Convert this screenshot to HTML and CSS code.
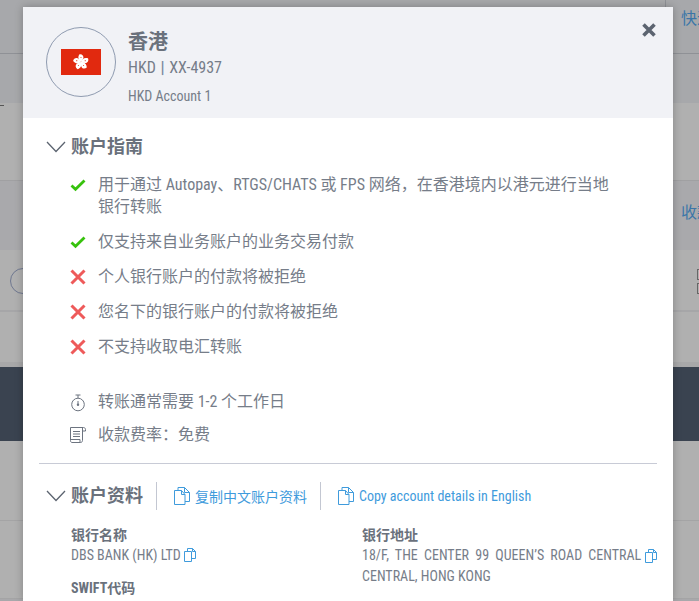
FILE: index.html
```html
<!DOCTYPE html>
<html lang="zh-CN">
<head>
<meta charset="utf-8">
<title>香港</title>
<link rel="stylesheet" href="styles.css">
</head>
<body>
<div class="page">
  <div class="band b1"></div>
  <div class="band b2"></div>
  <div class="band b3"></div>
  <div class="band b4"></div>
  <div class="band b5"></div>
  <div class="band b6"></div>
  <div class="band b7"></div>
  <div class="band b8"></div>
  <div class="band b9"></div>
  <span class="side-link link-a">快速</span>
  <span class="side-link link-b">收款</span>
  <span class="side-radio"></span>
  <span class="side-box box-a"></span>
  <span class="side-box box-b"></span>
  <span class="side-vline"></span>
  <span class="side-dash"></span>
</div>

<div class="modal">
  <header class="head">
    <div class="flag-ring">
      <svg class="flag" viewBox="0 0 40 26" width="40" height="26">
        <rect width="40" height="26" fill="#e1290f"/>
        <g transform="translate(20 13) scale(1.05)">
          <g fill="#fff">
            <path d="M0 0C-2.600-1.600-3.400-4.600-1.400-7.400 1-7.800 2.800-5.800 2.300-3.800 2-2.400 1-1.200 0 0Z"/>
            <path d="M0 0C-2.600-1.600-3.400-4.600-1.400-7.400 1-7.800 2.800-5.800 2.300-3.800 2-2.400 1-1.200 0 0Z" transform="rotate(72)"/>
            <path d="M0 0C-2.600-1.600-3.400-4.600-1.400-7.400 1-7.800 2.800-5.800 2.300-3.800 2-2.400 1-1.200 0 0Z" transform="rotate(144)"/>
            <path d="M0 0C-2.600-1.600-3.400-4.600-1.400-7.400 1-7.800 2.800-5.800 2.300-3.800 2-2.400 1-1.200 0 0Z" transform="rotate(216)"/>
            <path d="M0 0C-2.600-1.600-3.400-4.600-1.400-7.400 1-7.800 2.800-5.800 2.300-3.800 2-2.400 1-1.200 0 0Z" transform="rotate(288)"/>
          </g>
          <g fill="#e1290f">
            <circle cx="0" cy="-4.200" r=".5"/>
            <circle cx="4" cy="-1.300" r=".5"/>
            <circle cx="2.500" cy="3.400" r=".5"/>
            <circle cx="-2.500" cy="3.400" r=".5"/>
            <circle cx="-4" cy="-1.300" r=".5"/>
          </g>
        </g>
      </svg>
    </div>
    <div class="head-text">
      <div class="title">香港</div>
      <div class="acct">HKD <span class="bar">|</span> XX-4937</div>
      <div class="nick">HKD Account 1</div>
    </div>
    <svg class="close" viewBox="0 0 16 16" width="16" height="16"><path d="M2.500 2.500l11 11M13.500 2.500l-11 11" stroke="#5c6470" stroke-width="3.600" fill="none"/></svg>
  </header>

  <section class="guide">
    <h2 class="sec-title">
      <svg class="chev" viewBox="0 0 20 12" width="20" height="12"><path d="M1 1l9 9.500 9-9.500" fill="none" stroke="#5c6470" stroke-width="1.300"/></svg>
      账户指南
    </h2>
    <ul class="rules">
      <li class="rule"><svg class="ico" viewBox="0 0 16 16" width="16" height="16"><path d="M1.500 8.500l4 3.800 9-8.800" fill="none" stroke="#37c20d" stroke-width="2.800"/></svg><span>用于通过 Autopay、RTGS/CHATS 或 FPS 网络，在香港境内以港元进行当地银行转账</span></li>
      <li class="rule"><svg class="ico" viewBox="0 0 16 16" width="16" height="16"><path d="M1.500 8.500l4 3.800 9-8.800" fill="none" stroke="#37c20d" stroke-width="2.800"/></svg><span>仅支持来自业务账户的业务交易付款</span></li>
      <li class="rule"><svg class="ico" viewBox="0 0 16 16" width="16" height="16"><path d="M1.500 1.500l13 13M14.500 1.500l-13 13" fill="none" stroke="#ee5a5a" stroke-width="3"/></svg><span>个人银行账户的付款将被拒绝</span></li>
      <li class="rule"><svg class="ico" viewBox="0 0 16 16" width="16" height="16"><path d="M1.500 1.500l13 13M14.500 1.500l-13 13" fill="none" stroke="#ee5a5a" stroke-width="3"/></svg><span>您名下的银行账户的付款将被拒绝</span></li>
      <li class="rule"><svg class="ico" viewBox="0 0 16 16" width="16" height="16"><path d="M1.500 1.500l13 13M14.500 1.500l-13 13" fill="none" stroke="#ee5a5a" stroke-width="3"/></svg><span>不支持收取电汇转账</span></li>
    </ul>
    <ul class="facts">
      <li class="rule"><svg class="ico" viewBox="0 0 16 18" width="16" height="18"><g fill="none" stroke="#6d7480" stroke-width="1"><circle cx="8" cy="10.500" r="6.300"/><path d="M5.500 1h5M8 1v3M8 7v3"/></g><circle cx="8" cy="10.800" r="1.200" fill="#6d7480"/></svg><span>转账通常需要 1-2 个工作日</span></li>
      <li class="rule"><svg class="ico" viewBox="0 0 16 16" width="16" height="16"><g fill="none" stroke="#6d7480" stroke-width="1"><path d="M.5 .5h13c1 0 2 .8 2 2v1.500h-3M12.500 .5V13.500c0 1-.7 2-2 2H2c-1 0-1.500-.8-1.500-2V.5M.5 12.500h9.500v3"/><path d="M3 4.500h7M3 7h7M3 9.500h7"/></g></svg><span>收款费率：免费</span></li>
    </ul>
  </section>

  <section class="details">
    <div class="det-head">
      <h2 class="sec-title">
        <svg class="chev" viewBox="0 0 20 12" width="20" height="12"><path d="M1 1l9 9.500 9-9.500" fill="none" stroke="#5c6470" stroke-width="1.300"/></svg>
        账户资料
      </h2>
      <a class="copy">
        <svg viewBox="0 0 16 18" width="16" height="18"><g fill="none" stroke="#3f9bdc" stroke-width="1"><path d="M.5 3.500h7l3.500 4v10H.5zM7.500 3.500v4H11"/><path d="M4 3.500V.5h6.500l5 5v9H11M10.500.5v5h5"/></g></svg>
        复制中文账户资料
      </a>
      <a class="copy">
        <svg viewBox="0 0 16 18" width="16" height="18"><g fill="none" stroke="#3f9bdc" stroke-width="1"><path d="M.5 3.500h7l3.500 4v10H.5zM7.500 3.500v4H11"/><path d="M4 3.500V.5h6.500l5 5v9H11M10.500.5v5h5"/></g></svg>
        Copy account details in English
      </a>
    </div>
    <div class="fields">
      <div class="field">
        <div class="label">银行名称</div>
        <div class="value">DBS BANK (HK) LTD <svg class="mini" viewBox="0 0 12 14" width="12" height="14"><g fill="none" stroke="#3f9bdc" stroke-width="1"><path d="M.5 3.500h7v10h-7z"/><path d="M3.500 3.500V.5h5l3 3v7h-4M8.500.5v3h3"/></g></svg></div>
        <div class="label swift">SWIFT代码</div>
      </div>
      <div class="field">
        <div class="label">银行地址</div>
        <div class="value addr"><span class="just">18/F, THE CENTER 99 QUEEN’S ROAD CENTRAL</span><svg class="mini" viewBox="0 0 12 14" width="12" height="14"><g fill="none" stroke="#3f9bdc" stroke-width="1"><path d="M.5 3.500h7v10h-7z"/><path d="M3.500 3.500V.5h5l3 3v7h-4M8.500.5v3h3"/></g></svg></div>
        <div class="value">CENTRAL, HONG KONG</div>
      </div>
    </div>
  </section>
</div>
</body>
</html>
```
FILE: styles.css
```css
* { box-sizing: border-box; }
html, body { margin: 0; height: 100%; overflow: hidden; }
body {
  position: relative;
  width: 699px;
  height: 601px;
  font-family: Roboto, "Noto Sans CJK SC", sans-serif;
  font-stretch: 75%;
  color: #767d89;
  background: #a8a8ab;
}
.page { display: flex; flex-direction: column; height: 601px; }
.band { flex: none; }
.b1 { height: 54px; background: #a7a8ab; border-bottom: 1px solid #8f9196; }
.b2 { height: 49px; background: #a7a8ab; }
.b3 { height: 78px; background: #b0b0b0; border-bottom: 1px solid #a0a0a2; }
.b4 { height: 69px; background: #a9a9ac; }
.b5 { height: 62px; background: #b0b0b0; border-bottom: 2px solid #a6a6a8; }
.b6 { height: 55px; background: #b0b0b0; border-bottom: 5px solid #a8a8a9; }
.b7 { height: 74px; background: #3a4350; }
.b8 { height: 80px; background: #b0b0b0; border-bottom: 1px solid #a4a4a5; }
.b9 { height: 78px; background: #b0b0b0; border-bottom: 1px solid #a4a4a5; }
.side-link { position: absolute; left: 681px; font-size: 16px; line-height: 18px; color: #3a76a8; white-space: nowrap; }
.link-a { top: 10px; }
.link-b { top: 204px; }
.side-radio { position: absolute; left: 10px; top: 268px; width: 26px; height: 26px; border: 1px solid #6f7890; border-radius: 50%; }
.side-box { position: absolute; left: 697px; width: 6px; height: 11px; border: 1px solid #666; }
.box-a { top: 269px; }
.box-b { top: 283px; }
.side-vline { position: absolute; left: 665px; top: 0; width: 1px; height: 7px; background: #8f9196; }
.side-dash { position: absolute; left: 0; top: 105px; width: 4px; height: 1px; background: #555; }

.modal {
  position: absolute;
  left: 23px;
  top: 7px;
  width: 650px;
  height: 594px;
  background: #fff;
  box-shadow: 0 0 8px rgba(0,0,0,.25);
  overflow: hidden;
}
.head {
  position: relative;
  display: flex;
  height: 111px;
  padding: 20px 0 0 23px;
  background: #f1f2f6;
}
.flag-ring {
  flex: none;
  display: flex;
  align-items: center;
  justify-content: center;
  width: 70px;
  height: 70px;
  border: 1px solid #8f9bb0;
  border-radius: 50%;
}
.flag { display: block; }
.head-text { margin-left: 12px; margin-top: 1px; }
.title { font-size: 20px; line-height: 28px; font-weight: 700; color: #6a717c; }
.acct { margin-top: 2px; font-size: 16px; line-height: 20px; color: #767d89; }
.bar { margin: 0 1px; font-weight: 700; color: #7c8aa0; }
.nick { margin-top: 9px; font-size: 14px; line-height: 18px; color: #767d89; }
.close { position: absolute; left: 618px; top: 15px; }

.guide { padding: 0 16px 0 23px; }
.sec-title {
  display: flex;
  align-items: center;
  gap: 5px;
  margin: 0;
  font-size: 18px;
  line-height: 26px;
  font-weight: 700;
  color: #6a717c;
}
.guide > .sec-title { padding-top: 16px; height: 42px; }
.chev { display: block; flex: none; }
ul { list-style: none; margin: 0; padding: 0 0 0 24px; }
.rules { margin-top: 14px; }
.rule { display: flex; align-items: flex-start; font-size: 16px; line-height: 22px; margin-bottom: 13px; }
.rule .ico { flex: none; margin: 3px 12px 0 0; }
.rule span { max-width: 515px; }
.facts { margin-top: 33px; }
.facts .rule { margin-bottom: 11px; }

.details { margin: 0 16px; }
.det-head {
  display: flex;
  align-items: center;
  height: 65px;
  padding-left: 7px;
  border-top: 1px solid #c8cbd6;
  margin-top: 17px;
}
.copy {
  display: flex;
  align-items: center;
  gap: 5px;
  height: 28px;
  margin-left: 13px;
  padding-left: 17px;
  border-left: 1px solid #c3c7d2;
  font-size: 14px;
  color: #3f9bdc;
}
.fields { display: grid; grid-template-columns: 291px 295px; padding-left: 32px; margin-top: -3px; }
.label { font-size: 14px; line-height: 20px; font-weight: 700; color: #6a717c; }
.swift { margin-top: 12px; }
.value { font-size: 14px; line-height: 21px; color: #767d89; }
.addr { display: flex; align-items: center; justify-content: space-between; }
.just { word-spacing: 3px; white-space: nowrap; }
.mini { flex: none; vertical-align: -2px; }
```
